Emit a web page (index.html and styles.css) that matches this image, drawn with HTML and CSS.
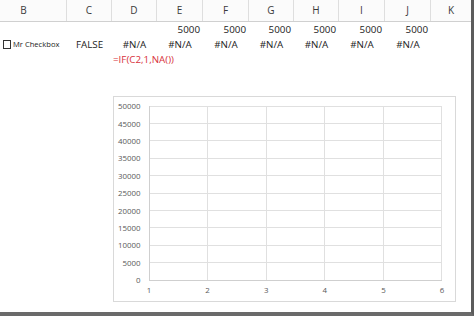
FILE: index.html
```html
<!DOCTYPE html>
<html lang="en">
<head>
    <meta charset="UTF-8">
    <title>Mr Checkbox</title>
    <link rel="stylesheet" href="styles.css">
</head>
<body>

<div class="sheet">
    <!-- Column headers -->
    <div class="row col-head">
        <div class="hcell first">B</div>
        <div class="hcell">C</div>
        <div class="hcell">D</div>
        <div class="hcell">E</div>
        <div class="hcell">F</div>
        <div class="hcell">G</div>
        <div class="hcell">H</div>
        <div class="hcell">I</div>
        <div class="hcell">J</div>
        <div class="hcell last">K</div>
    </div>

    <!-- Row 2: values -->
    <div class="row">
        <div></div><div></div><div></div>
        <div class="num">5000</div>
        <div class="num">5000</div>
        <div class="num">5000</div>
        <div class="num">5000</div>
        <div class="num">5000</div>
        <div class="num">5000</div>
        <div></div>
    </div>

    <!-- Row 3: checkbox + results -->
    <div class="row">
        <div class="check-cell"><span class="box"></span><span class="check-label">Mr Checkbox</span></div>
        <div class="mid">FALSE</div>
        <div class="mid">#N/A</div>
        <div class="mid">#N/A</div>
        <div class="mid">#N/A</div>
        <div class="mid">#N/A</div>
        <div class="mid">#N/A</div>
        <div class="mid">#N/A</div>
        <div class="mid">#N/A</div>
        <div></div>
    </div>

    <!-- Row 4: formula note -->
    <div class="row">
        <div></div><div></div>
        <div class="formula">=IF(C2,1,NA())</div>
    </div>

    <!-- Chart -->
    <div class="chart">
        <svg width="343" height="206" viewBox="0 0 343 206">
            <rect x="0.5" y="0.5" width="342" height="205" fill="#fff" stroke="#d9d9d9"/>
            <g stroke="#e0e0e0" stroke-width="1">
                <line x1="36" y1="10.5" x2="329" y2="10.5"/>
                <line x1="36" y1="27.5" x2="329" y2="27.5"/>
                <line x1="36" y1="44.5" x2="329" y2="44.5"/>
                <line x1="36" y1="62.5" x2="329" y2="62.5"/>
                <line x1="36" y1="79.5" x2="329" y2="79.5"/>
                <line x1="36" y1="97.5" x2="329" y2="97.5"/>
                <line x1="36" y1="114.5" x2="329" y2="114.5"/>
                <line x1="36" y1="131.5" x2="329" y2="131.5"/>
                <line x1="36" y1="149.5" x2="329" y2="149.5"/>
                <line x1="36" y1="166.5" x2="329" y2="166.5"/>
                <line x1="94.5" y1="10" x2="94.5" y2="184"/>
                <line x1="153.5" y1="10" x2="153.5" y2="184"/>
                <line x1="211.5" y1="10" x2="211.5" y2="184"/>
                <line x1="270.5" y1="10" x2="270.5" y2="184"/>
                <line x1="328.5" y1="10" x2="328.5" y2="184"/>
            </g>
            <g stroke="#cfcfcf" stroke-width="1">
                <line x1="36.5" y1="10" x2="36.5" y2="184"/>
                <line x1="36" y1="184.5" x2="329" y2="184.5"/>
            </g>
            <g class="axis-y" text-anchor="end">
                <text x="27.5" y="13">50000</text>
                <text x="27.5" y="30.5">45000</text>
                <text x="27.5" y="48">40000</text>
                <text x="27.5" y="65">35000</text>
                <text x="27.5" y="82.5">30000</text>
                <text x="27.5" y="100">25000</text>
                <text x="27.5" y="117.5">20000</text>
                <text x="27.5" y="135">15000</text>
                <text x="27.5" y="152">10000</text>
                <text x="27.5" y="169.5">5000</text>
                <text x="27.5" y="187">0</text>
            </g>
            <g class="axis-x" text-anchor="middle">
                <text x="36" y="197">1</text>
                <text x="94.6" y="197">2</text>
                <text x="153.2" y="197">3</text>
                <text x="211.8" y="197">4</text>
                <text x="270.4" y="197">5</text>
                <text x="329" y="197">6</text>
            </g>
        </svg>
    </div>
</div>

</body>
</html>
```

FILE: styles.css
```css
* {
    margin: 0;
    padding: 0;
    box-sizing: border-box;
}
body {
    font-family: 'Open Sans', 'Liberation Sans', sans-serif;
    background-color: #fff;
    color: #222;
    width: 474px;
    height: 316px;
    overflow: hidden;
}
.sheet {
    width: 474px;
    height: 316px;
    border-right: 3px solid #5c5c5c;
    border-bottom: 4px solid #6a6a6a;
    display: flex;
    flex-direction: column;
}
.row {
    display: grid;
    grid-template-columns: 67px 45px 45px 46px 46px 45px 45px 46px 46px 1fr;
    height: 15px;
    align-items: center;
    font-size: 9.8px;
    line-height: 15px;
    white-space: nowrap;
}
.col-head {
    height: 22px;
    line-height: 21px;
    background-color: #fbfbfb;
    border-bottom: 1px solid #d0d0d0;
    color: #3a3a3a;
    font-size: 10px;
}
.hcell {
    text-align: center;
    border-right: 1px solid #dedede;
    height: 21px;
}
.hcell.first {
    padding-right: 19px;
}
.hcell.last {
    border-right: none;
}
.num {
    text-align: right;
    padding-right: 3px;
}
.mid {
    text-align: center;
}
.check-cell {
    display: flex;
    align-items: center;
    padding-left: 3px;
    overflow: visible;
}
.box {
    width: 8px;
    height: 9px;
    border: 1px solid #333;
    margin-right: 2px;
    flex-shrink: 0;
}
.check-label {
    font-size: 7.6px;
    color: #222;
}
.formula {
    color: #d8323c;
    padding-left: 1px;
    overflow: visible;
}
.chart {
    margin-top: 29px;
    margin-left: 113px;
    width: 343px;
    height: 206px;
}
.chart svg {
    display: block;
}
.axis-y text,
.axis-x text {
    font-family: 'Open Sans', 'Liberation Sans', sans-serif;
    font-size: 7.9px;
    fill: #595959;
}
```
